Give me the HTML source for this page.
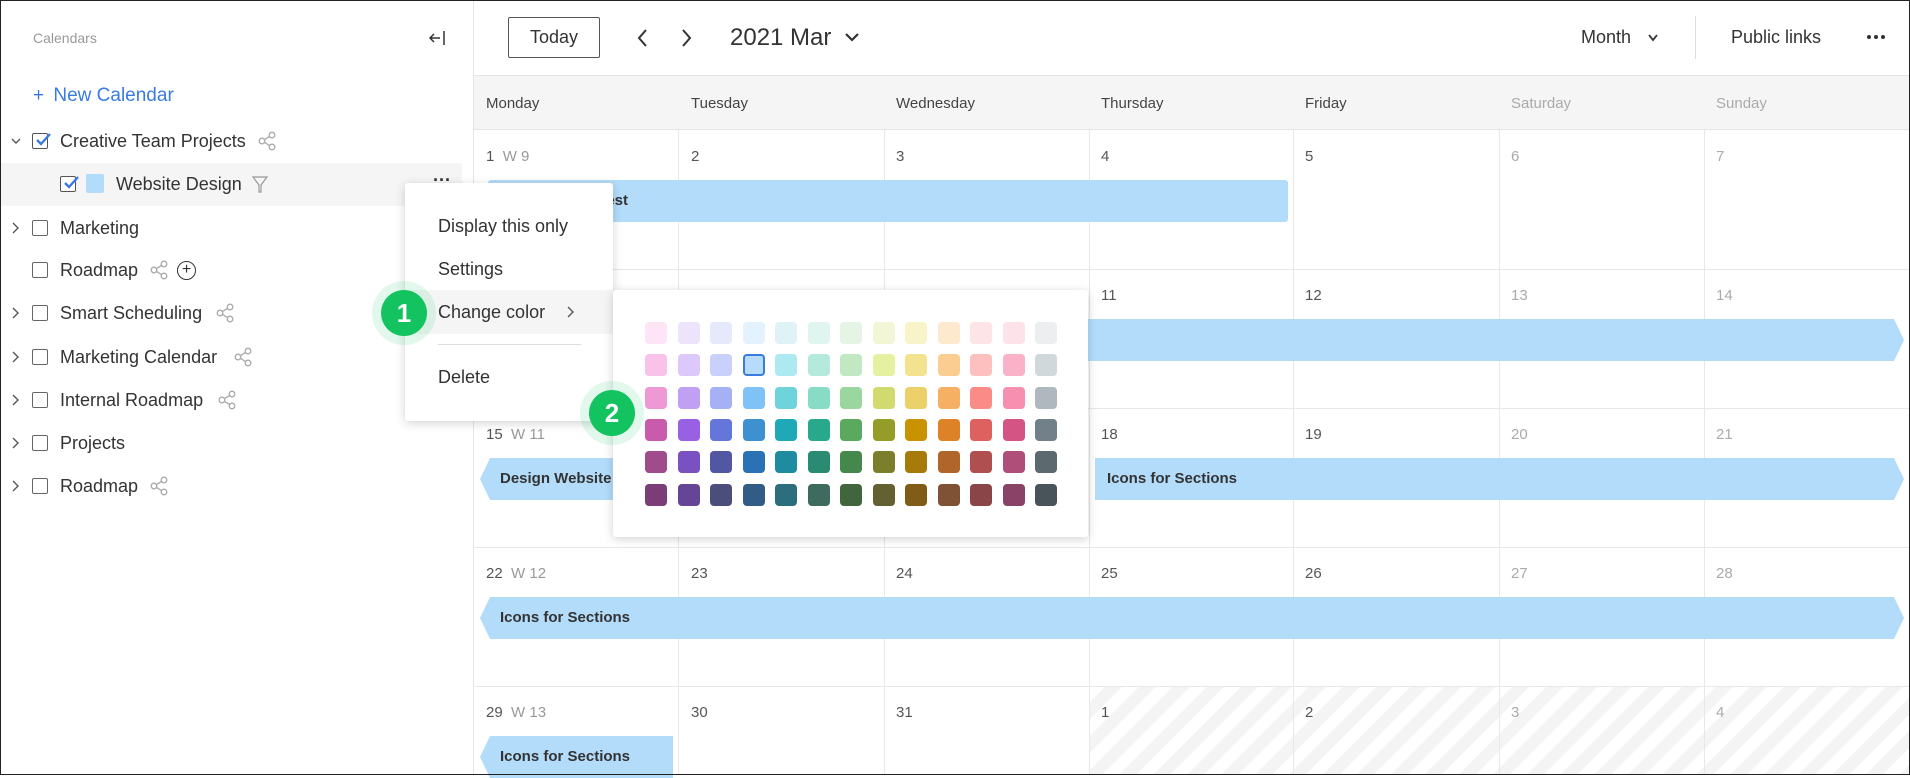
<!DOCTYPE html>
<html><head><meta charset="utf-8"><style>
*{box-sizing:border-box;margin:0;padding:0}
body{width:1910px;height:775px;overflow:hidden;background:#fff;font-family:"Liberation Sans",sans-serif;color:#333;position:relative}
.a{position:absolute;white-space:nowrap}
.frame{position:absolute;left:0;top:0;width:1910px;height:775px;border:1px solid #222;pointer-events:none;z-index:50}
.side{left:0;top:0;width:474px;height:775px;border-right:1px solid #e5e5e5}
.row{position:absolute;font-size:18px;color:#333}
.cb{position:absolute;width:16px;height:16px;border:1.5px solid #666;border-radius:2px;background:#fff}
.vl{position:absolute;top:75px;width:1px;height:700px;background:#e8e8e8}
.hl{position:absolute;left:474px;width:1436px;height:1px;background:#e8e8e8}
.wd{position:absolute;top:95px;font-size:15px;color:#444}
.dt{position:absolute;font-size:15px;color:#555}
.ev{position:absolute;background:#b3dcfb;font-size:15px;font-weight:bold;color:#333;padding-left:20px;line-height:42px;height:42px}
.sw{position:absolute;width:22px;height:22px;border-radius:4px}
.mi{position:absolute;left:438px;font-size:18px;color:#333}
.badge{position:absolute;width:46px;height:46px;border-radius:50%;background:#12c35f;color:#fff;font-size:26px;font-weight:bold;text-align:center;line-height:46px;box-shadow:0 0 0 9px rgba(18,195,95,0.12);z-index:20}
</style></head><body>
<svg width="0" height="0" style="position:absolute"><defs>
<g id="sh" fill="none" stroke="#aaa" stroke-width="1.3"><circle cx="4" cy="10" r="2.8"/><circle cx="14" cy="4" r="2.8"/><circle cx="14" cy="16" r="2.8"/><path d="M6.5 8.6 L11.5 5.4 M6.5 11.4 L11.5 14.6"/></g>
<path id="rc" d="M4 2 L9 7 L4 12" fill="none" stroke="#555" stroke-width="1.4"/>
</defs></svg>
<div class="a side"></div>
<div class="a" style="left:33px;top:30px;font-size:14px;color:#999">Calendars</div>
<svg class="a" style="left:428px;top:29px" width="18" height="18"><path d="M16 2 L16 16 M12 9 L2 9 M6 5 L2 9 L6 13" fill="none" stroke="#333" stroke-width="1.5"/></svg>
<div class="a" style="left:33px;top:85px;font-size:19px;color:#3a7be0">+ <span style="margin-left:4px">New Calendar</span></div>

<div class="a" style="left:0;top:163px;width:462px;height:43px;background:#f5f5f5"></div>
<svg class="a" style="left:10px;top:135px" width="12" height="12"><path d="M2 4 L6 8 L10 4" fill="none" stroke="#555" stroke-width="1.4"/></svg>
<div class="cb" style="left:32px;top:133px;border-color:#555"></div>
<svg class="a" style="left:33px;top:130px" width="20" height="20"><path d="M4 10 L8 14 L17 4" fill="none" stroke="#3a7be0" stroke-width="2.4"/></svg>
<div class="row" style="left:60px;top:131px">Creative Team Projects</div>
<svg class="a" style="left:258px;top:131px" width="20" height="20"><use href="#sh"/></svg>
<div class="cb" style="left:60px;top:176px;border-color:#555"></div>
<svg class="a" style="left:61px;top:173px" width="20" height="20"><path d="M4 10 L8 14 L17 4" fill="none" stroke="#3a7be0" stroke-width="2.4"/></svg>
<div class="a" style="left:86px;top:174px;width:18px;height:19px;background:#b3dcfb;border-radius:2px"></div>
<div class="row" style="left:116px;top:174px">Website Design</div>
<svg class="a" style="left:252px;top:175px" width="16" height="18"><path d="M1 2 L15 2 L9 10 L9 17 L7 17 L7 10 Z" fill="none" stroke="#999" stroke-width="1.2"/></svg>
<div class="a" style="left:433px;top:170px;font-size:18px;color:#333;font-weight:bold">···</div>

<svg class="a" style="left:9px;top:221px" width="12" height="14"><use href="#rc"/></svg><div class="cb" style="left:32px;top:220px"></div><div class="row" style="left:60px;top:218px">Marketing</div>
<div class="cb" style="left:32px;top:262px"></div><div class="row" style="left:60px;top:260px">Roadmap</div>
<svg class="a" style="left:150px;top:260px" width="20" height="20"><use href="#sh"/></svg>
<div class="a" style="left:177px;top:261px;width:19px;height:19px;border:1.5px solid #333;border-radius:50%;font-size:16px;line-height:15px;text-align:center">+</div>
<svg class="a" style="left:9px;top:306px" width="12" height="14"><use href="#rc"/></svg><div class="cb" style="left:32px;top:305px"></div><div class="row" style="left:60px;top:303px">Smart Scheduling</div>
<svg class="a" style="left:216px;top:303px" width="20" height="20"><use href="#sh"/></svg>
<svg class="a" style="left:9px;top:350px" width="12" height="14"><use href="#rc"/></svg><div class="cb" style="left:32px;top:349px"></div><div class="row" style="left:60px;top:347px">Marketing Calendar</div>
<svg class="a" style="left:234px;top:347px" width="20" height="20"><use href="#sh"/></svg>
<svg class="a" style="left:9px;top:393px" width="12" height="14"><use href="#rc"/></svg><div class="cb" style="left:32px;top:392px"></div><div class="row" style="left:60px;top:390px">Internal Roadmap</div>
<svg class="a" style="left:218px;top:390px" width="20" height="20"><use href="#sh"/></svg>
<svg class="a" style="left:9px;top:436px" width="12" height="14"><use href="#rc"/></svg><div class="cb" style="left:32px;top:435px"></div><div class="row" style="left:60px;top:433px">Projects</div>
<svg class="a" style="left:9px;top:479px" width="12" height="14"><use href="#rc"/></svg><div class="cb" style="left:32px;top:478px"></div><div class="row" style="left:60px;top:476px">Roadmap</div>
<svg class="a" style="left:150px;top:476px" width="20" height="20"><use href="#sh"/></svg>

<div class="a" style="left:508px;top:17px;width:92px;height:41px;border:1px solid #555;border-radius:2px;font-size:18px;text-align:center;line-height:39px">Today</div>
<svg class="a" style="left:636px;top:28px" width="14" height="20"><path d="M10 2 L3 10 L10 18" fill="none" stroke="#333" stroke-width="2"/></svg>
<svg class="a" style="left:679px;top:28px" width="14" height="20"><path d="M4 2 L11 10 L4 18" fill="none" stroke="#333" stroke-width="2"/></svg>
<div class="a" style="left:730px;top:24px;font-size:24px;color:#333">2021 Mar</div>
<svg class="a" style="left:844px;top:31px" width="16" height="12"><path d="M2 3 L8 9 L14 3" fill="none" stroke="#333" stroke-width="2.2"/></svg>
<div class="a" style="left:1581px;top:27px;font-size:18px">Month</div>
<svg class="a" style="left:1647px;top:33px" width="12" height="10"><path d="M2 2 L6 7 L10 2" fill="none" stroke="#333" stroke-width="1.8"/></svg>
<div class="a" style="left:1695px;top:16px;width:1px;height:43px;background:#ddd"></div>
<div class="a" style="left:1731px;top:27px;font-size:18px">Public links</div>
<svg class="a" style="left:1866px;top:34px" width="20" height="6"><circle cx="3" cy="3" r="2" fill="#333"/><circle cx="10" cy="3" r="2" fill="#333"/><circle cx="17" cy="3" r="2" fill="#333"/></svg>

<div class="a" style="left:474px;top:75px;width:1436px;height:55px;background:#f5f5f5;border-top:1px solid #e5e5e5;border-bottom:1px solid #e5e5e5"></div>
<div class="a" style="left:1089px;top:686px;width:821px;height:89px;background:repeating-linear-gradient(135deg,#fff 0 12px,#f4f4f4 12px 24px)"></div>
<div class="hl" style="top:269px"></div><div class="hl" style="top:408px"></div><div class="hl" style="top:547px"></div><div class="hl" style="top:686px"></div>
<div class="vl" style="left:678px;top:130px;height:645px"></div><div class="vl" style="left:884px;top:130px;height:645px"></div><div class="vl" style="left:1089px;top:130px;height:645px"></div><div class="vl" style="left:1293px;top:130px;height:645px"></div><div class="vl" style="left:1499px;top:130px;height:645px"></div><div class="vl" style="left:1704px;top:130px;height:645px"></div>
<div class="wd" style="left:486px">Monday</div><div class="wd" style="left:691px">Tuesday</div><div class="wd" style="left:896px">Wednesday</div><div class="wd" style="left:1101px">Thursday</div><div class="wd" style="left:1305px">Friday</div><div class="wd" style="left:1511px;color:#aaa">Saturday</div><div class="wd" style="left:1716px;color:#aaa">Sunday</div>

<div class="dt" style="left:486px;top:148px">1 &nbsp;<span style="color:#999">W 9</span></div><div class="dt" style="left:691px;top:148px">2</div><div class="dt" style="left:896px;top:148px">3</div><div class="dt" style="left:1101px;top:148px">4</div><div class="dt" style="left:1305px;top:148px">5</div><div class="dt" style="left:1511px;top:148px;color:#aaa">6</div><div class="dt" style="left:1716px;top:148px;color:#aaa">7</div>
<div class="dt" style="left:1101px;top:287px">11</div><div class="dt" style="left:1305px;top:287px">12</div><div class="dt" style="left:1511px;top:287px;color:#aaa">13</div><div class="dt" style="left:1716px;top:287px;color:#aaa">14</div>
<div class="dt" style="left:486px;top:426px">15 &nbsp;<span style="color:#999">W 11</span></div><div class="dt" style="left:1101px;top:426px">18</div><div class="dt" style="left:1305px;top:426px">19</div><div class="dt" style="left:1511px;top:426px;color:#aaa">20</div><div class="dt" style="left:1716px;top:426px;color:#aaa">21</div>
<div class="dt" style="left:486px;top:565px">22 &nbsp;<span style="color:#999">W 12</span></div><div class="dt" style="left:691px;top:565px">23</div><div class="dt" style="left:896px;top:565px">24</div><div class="dt" style="left:1101px;top:565px">25</div><div class="dt" style="left:1305px;top:565px">26</div><div class="dt" style="left:1511px;top:565px;color:#aaa">27</div><div class="dt" style="left:1716px;top:565px;color:#aaa">28</div>
<div class="dt" style="left:486px;top:704px">29 &nbsp;<span style="color:#999">W 13</span></div><div class="dt" style="left:691px;top:704px">30</div><div class="dt" style="left:896px;top:704px">31</div><div class="dt" style="left:1101px;top:704px">1</div><div class="dt" style="left:1305px;top:704px">2</div><div class="dt" style="left:1511px;top:704px;color:#aaa">3</div><div class="dt" style="left:1716px;top:704px;color:#aaa">4</div>

<div class="ev" style="left:488px;top:180px;width:800px;border-radius:3px"></div>
<div class="a" style="left:400px;top:180px;width:228px;text-align:right;font-size:15px;font-weight:bold;line-height:42px;color:#333">Website Design Test</div>
<div class="ev" style="left:480px;top:319px;width:1424px;clip-path:polygon(0 0,calc(100% - 10px) 0,100% 50%,calc(100% - 10px) 100%,0 100%)"></div>
<div class="ev" style="left:480px;top:458px;width:140px;clip-path:polygon(10px 0,100% 0,100% 100%,10px 100%,0 50%)">Design Website</div>
<div class="ev" style="left:1095px;top:458px;width:809px;padding-left:12px;clip-path:polygon(0 0,calc(100% - 10px) 0,100% 50%,calc(100% - 10px) 100%,0 100%)">Icons for Sections</div>
<div class="ev" style="left:480px;top:597px;width:1424px;clip-path:polygon(10px 0,calc(100% - 10px) 0,100% 50%,calc(100% - 10px) 100%,10px 100%,0 50%)">Icons for Sections</div>
<div class="ev" style="left:480px;top:736px;width:193px;clip-path:polygon(10px 0,100% 0,100% 100%,10px 100%,0 50%)">Icons for Sections</div>

<div class="a" style="left:405px;top:183px;width:208px;height:238px;background:#fff;box-shadow:0 2px 10px rgba(0,0,0,0.18);border-radius:3px;z-index:10"></div>
<div class="a" style="left:405px;top:290px;width:208px;height:44px;background:#f5f5f5;z-index:11"></div>
<div class="mi" style="top:216px;z-index:12">Display this only</div>
<div class="mi" style="top:259px;z-index:12">Settings</div>
<div class="mi" style="top:302px;z-index:12">Change color</div>
<svg class="a" style="left:565px;top:305px;z-index:12" width="10" height="14"><path d="M3 2 L8 7 L3 12" fill="none" stroke="#555" stroke-width="1.4"/></svg>
<div class="a" style="left:438px;top:344px;width:143px;height:1px;background:#ddd;z-index:12"></div>
<div class="mi" style="top:367px;z-index:12">Delete</div>

<div class="a" style="left:613px;top:290px;width:475px;height:247px;background:#fff;box-shadow:0 2px 10px rgba(0,0,0,0.18);border-radius:3px;z-index:13"></div>
<div id="sw" style="position:absolute;left:0;top:0;z-index:14"></div>
<div class="badge" style="left:381px;top:290px">1</div>
<div class="badge" style="left:589px;top:390px">2</div>
<div class="frame"></div>
<script>
var c=[
["#fde4f6","#ede4fb","#e6e9fb","#e3f2fd","#dff2f5","#e0f5ef","#e6f4e6","#f2f6d6","#f8f3c9","#fde9cd","#fde4e6","#fde2ea","#eceeef"],
["#f9c2e8","#dcc8fa","#c8d0fb","#b7dcfb","#ade9f1","#b5e9dc","#c2e8c3","#e5f0a1","#f3e38e","#fccd90","#fdc0bf","#fab2c8","#d0d8db"],
["#ef98d6","#c0a0f2","#a6b0f5","#7fc2f8","#6fd3dc","#88dbc5","#9ad79e","#d0da6e","#ecd06a","#f6b063","#fb8b86","#f78fb0","#aeb8be"],
["#c85bab","#9861e3","#6476d9","#3e91d1","#1fa9b8","#29a98b","#5aa95e","#959d28","#c99300","#dd8226","#df615f","#d45584","#728089"],
["#a04b8c","#7a51c0","#5257a3","#2b71b5","#1e8ba0","#2a8a72","#45884b","#7b7f2c","#a77b0a","#b0652a","#b04f4f","#b04e7a","#5c6a70"],
["#7b3d78","#644596","#4b4d7b","#315c85","#2d6e7d","#3d6c5f","#41663d","#636131","#805c14","#7f5135","#8a4549","#8a4266","#49545a"]];
var h="";
for(var r=0;r<6;r++)for(var k=0;k<13;k++){
var x=645+k*32.5,y=322+r*32.3;
var b=(r==1&&k==3)?"border:2px solid #3a7be0;":"";
h+='<div class="sw" style="left:'+x+'px;top:'+y+'px;background:'+c[r][k]+';'+b+'"></div>';}
document.getElementById("sw").innerHTML=h;
</script>
</body></html>
